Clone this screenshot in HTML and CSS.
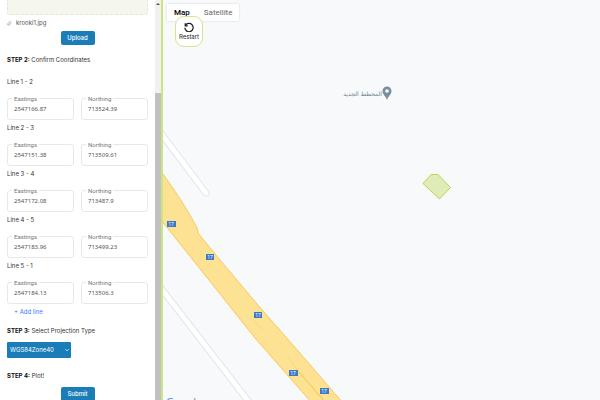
FILE: index.html
```html
<!DOCTYPE html>
<html lang="en">
<head>
  <meta charset="UTF-8">
  <title>Plot Coordinates</title>
  <link rel="stylesheet" href="styles.css">
</head>
<body>
  <div class="app">
    <aside class="sidebar">
      <form class="panel">
        <div class="dropzone"></div>
        <div class="file">
          <svg class="clip" viewBox="0 0 24 24" aria-hidden="true">
            <path d="M20 11l-9 9a5.500 5.500 0 0 1-8-8l9-9a4 4 0 0 1 6 6l-9 9a2 2 0 0 1-3-3l8-8"/>
          </svg>
          <span>krooki1.jpg</span>
        </div>
        <button type="button" class="btn">Upload</button>

        <p class="step step-confirm"><strong>STEP 2:</strong> Confirm Coordinates</p>

        <div class="lines">
          <section class="line">
            <h3>Line 1 - 2</h3>
            <div class="fields">
              <div class="field"><label for="e1">Eastings</label><input type="text" id="e1" value="2547166.87"></div>
              <div class="field"><label for="n1">Northing</label><input type="text" id="n1" value="713524.39"></div>
            </div>
          </section>
          <section class="line">
            <h3>Line 2 - 3</h3>
            <div class="fields">
              <div class="field"><label for="e2">Eastings</label><input type="text" id="e2" value="2547151.38"></div>
              <div class="field"><label for="n2">Northing</label><input type="text" id="n2" value="713509.61"></div>
            </div>
          </section>
          <section class="line">
            <h3>Line 3 - 4</h3>
            <div class="fields">
              <div class="field"><label for="e3">Eastings</label><input type="text" id="e3" value="2547172.08"></div>
              <div class="field"><label for="n3">Northing</label><input type="text" id="n3" value="713487.9"></div>
            </div>
          </section>
          <section class="line">
            <h3>Line 4 - 5</h3>
            <div class="fields">
              <div class="field"><label for="e4">Eastings</label><input type="text" id="e4" value="2547183.96"></div>
              <div class="field"><label for="n4">Northing</label><input type="text" id="n4" value="713499.23"></div>
            </div>
          </section>
          <section class="line">
            <h3>Line 5 - 1</h3>
            <div class="fields">
              <div class="field"><label for="e5">Eastings</label><input type="text" id="e5" value="2547184.13"></div>
              <div class="field"><label for="n5">Northing</label><input type="text" id="n5" value="713506.3"></div>
            </div>
          </section>
        </div>
        <a href="#" class="add-line">+ Add line</a>

        <label class="step" for="projection"><strong>STEP 3:</strong> Select Projection Type</label>
        <div class="select-wrap">
          <select id="projection">
            <option>WGS84Zone40</option>
          </select>
          <svg class="chevron" viewBox="0 0 10 10" aria-hidden="true"><path d="M1 3l4 4 4-4"/></svg>
        </div>

        <p class="step step-plot"><strong>STEP 4:</strong> Plot!</p>
        <button type="submit" class="btn">Submit</button>
      </form>
      <div class="scrollbar" aria-hidden="true">
        <svg viewBox="0 0 6 6"><path d="M1 4l2-2 2 2z"/></svg>
        <div class="thumb"></div>
      </div>
    </aside>

    <main class="map">
      <svg class="map-canvas" viewBox="0 0 437 400" preserveAspectRatio="xMinYMin slice">
        <!-- side roads -->
        <path class="road-edge" d="M-6 128L43 193M-6 283L93 411"/>
        <path class="road" d="M-6 128L43 193M-6 283L93 411"/>

        <!-- highway -->
        <path class="highway" d="M-2 171L0 174C10 188 23 207 33 226Q35 229 35 233L57 260L100 311L136 352L186 410H155L92 338L30 260L-2 220z"/>
        <path class="highway-split faint" d="M90 319l10 11M124 357l14 17"/>
        <path class="highway-split" d="M136 372l26 30"/>

        <g class="shield">
          <rect x="4" y="221" width="9" height="6"/><text x="8" y="226">17</text>
          <rect x="43" y="254" width="8" height="6"/><text x="47" y="259">17</text>
          <rect x="91" y="312" width="8" height="6"/><text x="95" y="317">17</text>
          <rect x="126" y="370" width="9" height="6"/><text x="130" y="375">17</text>
          <rect x="157" y="388" width="9" height="6"/><text x="161" y="393">17</text>
        </g>

        <!-- plotted parcel -->
        <path class="parcel" d="M260 183.500L268 174.500H275L287.500 187.500L276.500 199z"/>

        <text class="place" x="219" y="96" lang="ar">المخطط الجديد</text>
        <path class="pin" d="M224 100C223 96 219.500 95 219.500 91a4.500 4.500 0 0 1 9 0C228.500 95 225 96 224 100z"/>
        <circle class="pin-hole" cx="224" cy="91" r="1.800"/>
      </svg>

      <div class="map-type">
        <button type="button" class="active">Map</button>
        <button type="button">Satellite</button>
      </div>
      <button type="button" class="restart">
        <svg viewBox="0 0 24 24" aria-hidden="true"><path d="M3 3v6h6M3 9a10 10 0 1 1-1 5"/></svg>
        <span>Restart</span>
      </button>
      <div class="logo"><span class="blue">G</span><span class="red">o</span><span class="yellow">o</span><span class="blue">g</span><span class="green">l</span><span class="red">e</span></div>
    </main>
  </div>
</body>
</html>
```

FILE: styles.css
```css
* {
  box-sizing: border-box;
}

body {
  margin: 0;
  font-family: Inter, "Open Sans", sans-serif;
  font-size: 6px;
  line-height: 10px;
  color: #333;
  background: #fff;
}

button, input, select {
  font: inherit;
}

.app {
  display: grid;
  grid-template-columns: minmax(163px, 27%) 1fr;
  height: 100vh;
  overflow: hidden;
}

.sidebar {
  display: flex;
  min-height: 0;
  overflow: hidden;
  border-right: 2px solid #cbe582;
}

.panel {
  flex: 1;
  display: flex;
  flex-direction: column;
  padding: 0 7px;
}

.dropzone {
  flex: none;
  height: 15px;
  background: #f5f7ee;
  border: 1px dashed #e3e8d3;
  border-top: 0;
  border-radius: 0 0 3px 3px;
}

.file {
  display: flex;
  align-items: center;
  gap: 4px;
  margin: 3px 0;
  color: #555;
}

.clip {
  width: 5px;
  height: 5px;
  fill: none;
  stroke: #888;
  stroke-width: 2;
}

.btn {
  flex: none;
  align-self: center;
  width: 34px;
  height: 14px;
  padding: 0;
  border: 0;
  border-radius: 2px;
  background: #1a7db8;
  color: #fff;
  font-size: 6px;
  font-weight: 500;
}

.step {
  display: block;
  margin: 9px 0 6px;
}

.step-confirm {
  margin: 10px 0 12px;
}

.step-plot {
  margin-top: 13px;
}

.step strong {
  color: #111;
}

.line {
  display: flex;
  flex-direction: column;
  gap: 11px;
  margin-bottom: 3px;
}

.line h3 {
  margin: 0;
  font-size: 6px;
  font-weight: normal;
}

.fields {
  display: flex;
  gap: 7px;
}

.field {
  position: relative;
  flex: 1;
}

.field label {
  position: absolute;
  top: -3px;
  left: 5px;
  padding: 0 2px;
  line-height: 8px;
  font-family: Roboto, sans-serif;
  color: #777;
  background: #fff;
}

.field input {
  display: block;
  width: 100%;
  height: 22px;
  padding: 0 6px;
  border: 1px solid #e8e8e8;
  border-radius: 3px;
  font-family: "Noto Sans", sans-serif;
  color: #555;
}

.add-line {
  align-self: flex-start;
  margin-left: 7px;
  color: #3b82f6;
  text-decoration: none;
}

.select-wrap {
  position: relative;
  width: 64px;
}

.select-wrap select {
  appearance: none;
  display: block;
  width: 100%;
  height: 16px;
  padding: 0 3px;
  border: 0;
  border-radius: 1px;
  background: #1a7db8;
  color: #fff;
}

.chevron {
  position: absolute;
  top: 6px;
  right: 2px;
  width: 4px;
  height: 4px;
  fill: none;
  stroke: #fff;
  stroke-width: 2;
}

.scrollbar {
  display: flex;
  flex-direction: column;
  width: 6px;
  background: #f1f1f1;
}

.scrollbar svg {
  height: 6px;
  margin-top: 1px;
  fill: #555;
}

.thumb {
  flex: 1;
  margin-top: 86px;
  background: #c1c1c1;
}

.map {
  position: relative;
  overflow: hidden;
  background: #f8f9fb;
}

.map-canvas {
  display: block;
  width: 100%;
  height: 100%;
}

.road-edge, .road {
  fill: none;
  stroke: #e4e5e8;
  stroke-width: 7;
  stroke-linecap: round;
}

.road {
  stroke: #fff;
  stroke-width: 5;
}

.highway {
  fill: #fde293;
  stroke: #f9c85b;
}

.highway-split {
  fill: none;
  stroke: #f8c04a;
}

.highway-split.faint {
  stroke: #fad67c;
}

.shield rect {
  fill: #3c78c8;
}

.shield text {
  fill: #fff;
  font-family: Roboto, sans-serif;
  font-size: 5px;
  text-anchor: middle;
}

.parcel {
  fill: #dfecb8;
  stroke: #b9d64f;
}

.place {
  fill: #6e828b;
  font-family: "DejaVu Sans", sans-serif;
  font-size: 6px;
  text-anchor: end;
}

.pin {
  fill: #78909c;
}

.pin-hole {
  fill: #fff;
}

.map-type {
  position: absolute;
  top: 4px;
  left: 4px;
  display: flex;
  background: #fff;
  border-radius: 1px;
  box-shadow: 0 0 2px rgba(0, 0, 0, 0.2);
}

.map-type button {
  height: 17px;
  padding: 0 7px;
  border: 0;
  background: none;
  font-family: Roboto, sans-serif;
  font-size: 8px;
  color: #666;
}

.map-type .active {
  color: #000;
  font-weight: 500;
}

.restart {
  position: absolute;
  top: 16px;
  left: 12px;
  display: flex;
  flex-direction: column;
  align-items: center;
  justify-content: center;
  width: 28px;
  height: 31px;
  padding: 0;
  border: 1px solid #d3e68f;
  border-radius: 9px;
  background: #fff;
  color: #222;
}

.restart svg {
  width: 10px;
  height: 10px;
  fill: none;
  stroke: #222;
  stroke-width: 3;
}

.logo {
  position: absolute;
  left: 3px;
  bottom: -11px;
  font-family: "Open Sans", sans-serif;
  font-size: 11px;
  line-height: 18px;
}

.blue {
  color: #4285f4;
}

.red {
  color: #ea4335;
}

.yellow {
  color: #fbbc04;
}

.green {
  color: #34a853;
}
```
